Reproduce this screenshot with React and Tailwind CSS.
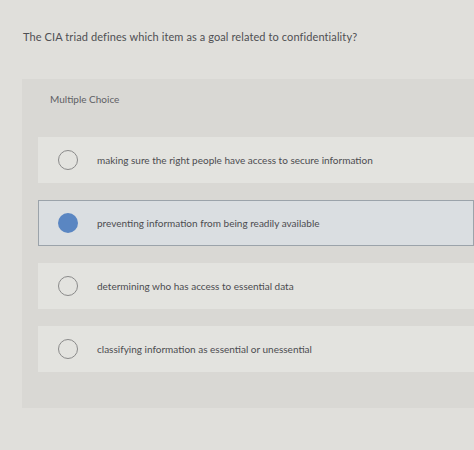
import React from 'react';

const options = [
    { id: 1, text: 'making sure the right people have access to secure information' },
    { id: 2, text: 'preventing information from being readily available', selected: true },
    { id: 3, text: 'determining who has access to essential data' },
    { id: 4, text: 'classifying information as essential or unessential' },
];

const App = () => {
    return (
        <div className="w-[474px] h-[450px] overflow-hidden bg-[#e0dfdb] font-['Lato',sans-serif]">
            <div className="pl-[23px] pt-[29px] h-[79px]">
                <h1 className="text-[11px] text-[#4f4f53] tracking-[0.1px]">
                    The CIA triad defines which item as a goal related to confidentiality?
                </h1>
            </div>

            <div className="ml-[22px] h-[329px] bg-[#d9d8d4]">
                <div className="pl-[28px] pt-[11px] h-[58px] leading-[14px]">
                    <span className="text-[10px] text-[#606064]">Multiple Choice</span>
                </div>

                <div className="ml-[16px] flex flex-col gap-[17px]">
                    {options.map((o) => (
                        <div
                            key={o.id}
                            className={
                                o.selected
                                    ? 'h-[46px] flex items-center border border-[#9ba3aa] bg-[#dadee1]'
                                    : 'h-[46px] flex items-center border border-transparent bg-[#e3e3df]'
                            }
                        >
                            <div className="w-[58px] flex justify-center">
                                {o.selected ? (
                                    <span className="w-[20px] h-[20px] rounded-full bg-[#5a86c2]" />
                                ) : (
                                    <span className="w-[20px] h-[20px] rounded-full border border-[#8a8a8a]" />
                                )}
                            </div>
                            <span className="text-[10px] text-[#4c4c50]">{o.text}</span>
                        </div>
                    ))}
                </div>
            </div>
        </div>
    );
};

export default App;
